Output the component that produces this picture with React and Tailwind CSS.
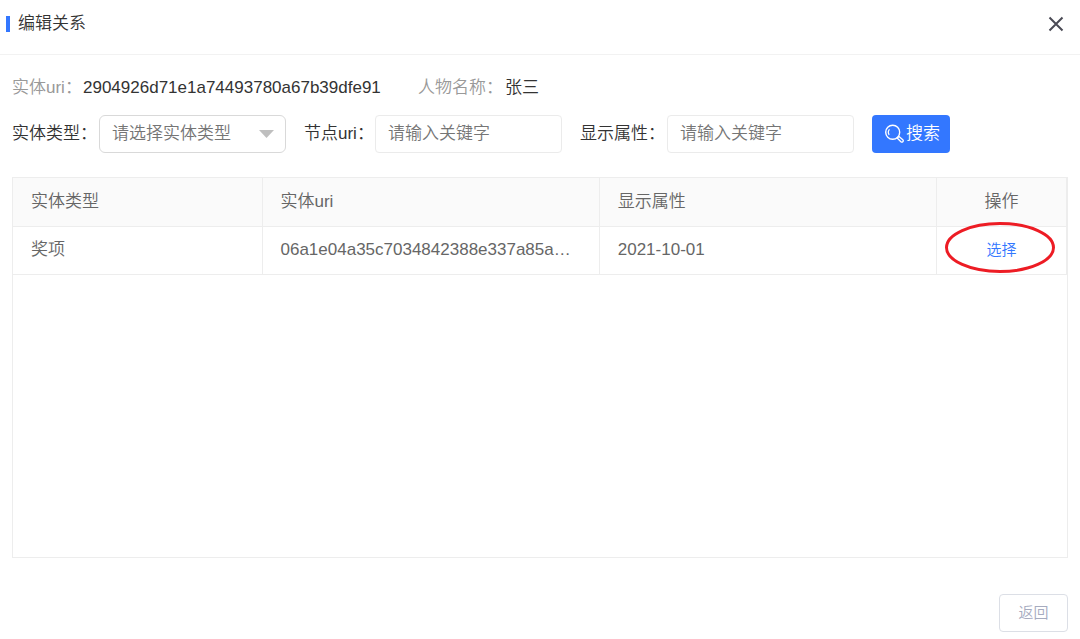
import React, { useState } from 'react';

const SearchIcon = () => (
  <svg className="w-5 h-5" viewBox="0 0 20 20" fill="none" stroke="currentColor" aria-hidden="true">
    <circle cx="8.7" cy="8.2" r="7" strokeWidth="1.4" />
    <path d="M5 10.6A4.4 4.4 0 0 1 5.2 5.6" strokeWidth="1.1" strokeLinecap="round" />
    <path d="M13.2 14l1.8-1.6 3.8 3.4a1.3 1.3 0 0 1-1.9 1.9z" strokeWidth="1.3" strokeLinejoin="round" />
  </svg>
);

const CloseIcon = () => (
  <svg className="w-4 h-4" viewBox="0 0 16 16" fill="none" stroke="currentColor" strokeWidth="2" aria-hidden="true">
    <path d="M1.5 1.5l13 13M14.5 1.5l-13 13" />
  </svg>
);

const entityTypes = ['奖项'];

const rows = [
  { type: '奖项', uri: '06a1e04a35c7034842388e337a85a6c41f', attr: '2021-10-01' },
];

const App = () => {
  const [filters, setFilters] = useState({
    entityType: '',
    nodeUri: '',
    attr: '',
  });

  const handleInputChange = (e) => {
    setFilters({
      ...filters,
      [e.target.name]: e.target.value,
    });
  };

  const handleSubmit = (e) => {
    e.preventDefault();
  };

  return (
    <div className="w-full bg-white font-['Liberation_Sans','Noto_Sans_CJK_SC',sans-serif] font-[350] text-[17px] leading-6 text-[#333333]">
      {/* Header */}
      <header className="flex items-center justify-between h-[55px] pb-[6px] pl-[6px] pr-4 border-b border-[#f2f2f2]">
        <div className="flex items-center gap-2">
          <span className="w-1 h-4 bg-[#3377ff]" />
          <h1>编辑关系</h1>
        </div>
        <button type="button" aria-label="关闭" className="text-[#4a4a55]">
          <CloseIcon />
        </button>
      </header>

      <main className="px-3 pt-[21px]">
        {/* Current entity */}
        <dl className="flex items-center">
          <dt className="w-[71px] text-[#999999] whitespace-nowrap">实体uri：</dt>
          <dd className="w-[305px] mr-[30px]">2904926d71e1a74493780a67b39dfe91</dd>
          <dt className="w-[87px] text-[#999999] whitespace-nowrap">人物名称：</dt>
          <dd>张三</dd>
        </dl>

        {/* Filters */}
        <form onSubmit={handleSubmit} className="flex items-center gap-[18px] mt-[15px]">
          <div className="flex items-center">
            <label htmlFor="entityType" className="w-[87px] whitespace-nowrap">实体类型：</label>
            <div className="relative">
              <select
                id="entityType"
                name="entityType"
                value={filters.entityType}
                onChange={handleInputChange}
                className="block w-[187px] h-[38px] pl-3 pr-8 appearance-none bg-white text-[#757575]
                           border border-[#d9d9d9] rounded-md"
              >
                <option value="">请选择实体类型</option>
                {entityTypes.map((type) => (
                  <option key={type} value={type}>
                    {type}
                  </option>
                ))}
              </select>
              <svg
                className="absolute right-3 top-[15px] w-[15px] h-2 pointer-events-none"
                viewBox="0 0 15 8"
                fill="#bfbfbf"
                aria-hidden="true"
              >
                <path d="M0 0h15L7.5 8z" />
              </svg>
            </div>
          </div>

          <div className="flex items-center">
            <label htmlFor="nodeUri" className="w-[71px] whitespace-nowrap">节点uri：</label>
            <input
              id="nodeUri"
              name="nodeUri"
              type="text"
              value={filters.nodeUri}
              onChange={handleInputChange}
              placeholder="请输入关键字"
              className="w-[187px] h-[38px] px-3 border border-[#ebebeb] rounded-sm placeholder:text-[#757575]"
            />
          </div>

          <div className="flex items-center">
            <label htmlFor="attr" className="w-[87px] whitespace-nowrap">显示属性：</label>
            <input
              id="attr"
              name="attr"
              type="text"
              value={filters.attr}
              onChange={handleInputChange}
              placeholder="请输入关键字"
              className="w-[187px] h-[38px] px-3 border border-[#ebebeb] rounded-sm placeholder:text-[#757575]"
            />
          </div>

          <button
            type="submit"
            className="flex items-center gap-[2px] h-[38px] pl-3 pr-[10px] bg-[#3377ff] text-white rounded whitespace-nowrap"
          >
            <SearchIcon />
            搜索
          </button>
        </form>

        {/* Relation table */}
        <div className="mt-6 min-h-[381px] border border-[#ededed]">
          <table className="w-full table-fixed text-left text-[#666666]">
            <thead>
              <tr className="h-12 bg-[#fafafa] border-b border-[#ededed]">
                <th className="w-[249px] px-[18px] font-[350] border-r border-[#ededed]">实体类型</th>
                <th className="px-[18px] font-[350] border-r border-[#ededed]">实体uri</th>
                <th className="px-[18px] font-[350] border-r border-[#ededed]">显示属性</th>
                <th className="w-[130px] font-[350] text-center border-r border-[#ededed]">操作</th>
              </tr>
            </thead>
            <tbody>
              {rows.map((row) => (
                <tr key={row.uri} className="h-12 border-b border-[#ededed]">
                  <td className="px-[18px] border-r border-[#ededed]">{row.type}</td>
                  <td className="pl-[18px] pr-5 border-r border-[#ededed] truncate">{row.uri}</td>
                  <td className="px-[18px] border-r border-[#ededed]">{row.attr}</td>
                  <td className="relative text-center border-r border-[#ededed]">
                    <button type="button" className="text-[15px] text-[#3377ff]">选择</button>
                    <svg
                      className="absolute left-2 -top-[5px] w-[110px] h-[51px] pointer-events-none"
                      viewBox="0 0 110 51"
                      fill="none"
                      aria-hidden="true"
                    >
                      <ellipse cx="55" cy="25.5" rx="53.5" ry="24" stroke="#ed1c24" strokeWidth="3" />
                    </svg>
                  </td>
                </tr>
              ))}
            </tbody>
          </table>
        </div>

        {/* Footer */}
        <div className="flex justify-end mt-9 pb-[7px]">
          <button
            type="button"
            className="w-[69px] h-[38px] text-[15px] text-[#a6abbf] border border-[#dcdfe6] rounded"
          >
            返回
          </button>
        </div>
      </main>
    </div>
  );
};

export default App;
